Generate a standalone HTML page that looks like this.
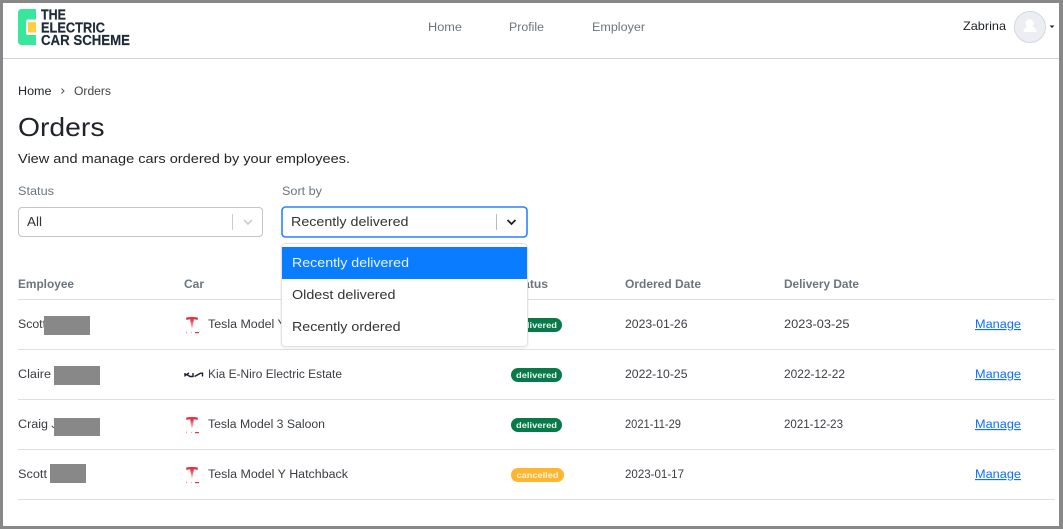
<!DOCTYPE html>
<html><head><meta charset="utf-8"><style>
html,body{margin:0;padding:0;background:#fff}
svg{display:block;font-family:"Liberation Sans",sans-serif}
</style></head><body>
<svg width="1063" height="529" viewBox="0 0 1063 529" xmlns="http://www.w3.org/2000/svg">
<defs>
<linearGradient id="fade" x1="0" y1="0" x2="0" y2="1"><stop offset="0" stop-color="#e8192c"/><stop offset="1" stop-color="#fde6e8"/></linearGradient>
<g id="tesla">
<path d="M0 0.600Q6 -0.600 12 0.600L11.500 3Q9 2.300 6 2.300Q3 2.300 0.500 3Z" fill="#ee2b3a"/>
<path d="M4.200 2.200H7.800L6.600 11.500H5.400Z" fill="url(#fade)"/>
<rect x="0" y="14.500" width="1" height="2" fill="#f6a5ac"/><rect x="5" y="15" width="1" height="1" fill="#f6a5ac"/><rect x="9" y="15" width="4" height="1.200" fill="#e8303f"/>
</g>
</defs>
<rect width="1063" height="529" fill="#888"/>
<rect x="3" y="3" width="1056" height="523" fill="#fff"/>
<rect x="3" y="58" width="1056" height="1" fill="#ccd3e0"/>

<!-- logo -->
<path d="M22 9h14v10.500h-8q-2 0-2 2v11.500q0 2 2 2h8v10h-14q-4 0-4-4v-28q0-4 4-4Z" fill="#38e69c"/>
<rect x="28" y="22" width="8" height="10.500" fill="#ffcf3c"/>
<g fill="#1f2a37" font-weight="700" font-size="14.500" stroke="#1f2a37" stroke-width="0.200">
<text x="41" y="19.500" textLength="25" lengthAdjust="spacingAndGlyphs">THE</text>
<text x="41" y="32.500" textLength="64" lengthAdjust="spacingAndGlyphs">ELECTRIC</text>
<text x="41" y="45" textLength="89" lengthAdjust="spacingAndGlyphs">CAR SCHEME</text>
</g>

<!-- nav -->
<g fill="#6c757d" font-size="11.500">
<text x="428" y="31" textLength="34" lengthAdjust="spacingAndGlyphs">Home</text>
<text x="509" y="31" textLength="35" lengthAdjust="spacingAndGlyphs">Profile</text>
<text x="592" y="31" textLength="53" lengthAdjust="spacingAndGlyphs">Employer</text>
</g>
<text x="963" y="30" font-size="12" fill="#212529" textLength="43" lengthAdjust="spacingAndGlyphs">Zabrina</text>
<circle cx="1030" cy="27" r="15.500" fill="#eceef3" stroke="#d3d8e0"/>
<circle cx="1029.500" cy="23.500" r="4.200" fill="#fff"/>
<path d="M1023.500 32q0-5.500 6.500-5.500t6.500 5.500Z" fill="#fff"/>
<path d="M1049.500 25.500h5l-2.500 2.500Z" fill="#212529"/>

<!-- breadcrumb -->
<text x="18" y="95" font-size="11.500" fill="#212529" textLength="33.500" lengthAdjust="spacingAndGlyphs">Home</text>
<path d="M61.500 88.500l2.500 2.500-2.500 2.500" fill="none" stroke="#555" stroke-width="1"/>
<text x="74" y="95" font-size="11.500" fill="#444" textLength="37" lengthAdjust="spacingAndGlyphs">Orders</text>

<text x="18" y="136" font-size="26" fill="#212529" textLength="86.500" lengthAdjust="spacingAndGlyphs">Orders</text>
<text x="18" y="163" font-size="13" fill="#212529" textLength="332" lengthAdjust="spacingAndGlyphs">View and manage cars ordered by your employees.</text>

<!-- filters -->
<text x="18" y="195" font-size="11.500" fill="#6c757d" textLength="36" lengthAdjust="spacingAndGlyphs">Status</text>
<text x="282" y="195" font-size="11.500" fill="#6c757d" textLength="40" lengthAdjust="spacingAndGlyphs">Sort by</text>

<rect x="18.500" y="207.500" width="244" height="29" rx="3.500" fill="#fff" stroke="#c4c4c4"/>
<text x="27" y="226" font-size="13" fill="#333" textLength="15" lengthAdjust="spacingAndGlyphs">All</text>
<rect x="232" y="214" width="1" height="16" fill="#ccc"/>
<path d="M244 220l4 4 4-4" fill="none" stroke="#ccc" stroke-width="1.600"/>

<rect x="282" y="207" width="245" height="30" rx="3.500" fill="#fff" stroke="#2684ff" stroke-width="1.600"/>
<text x="291" y="226" font-size="13" fill="#333" textLength="117.500" lengthAdjust="spacingAndGlyphs">Recently delivered</text>
<rect x="496" y="214" width="1" height="16" fill="#bbb"/>
<path d="M507.500 220l4 4 4-4" fill="none" stroke="#222" stroke-width="1.800"/>

<!-- table header -->
<g fill="#6c757d" font-size="11.500" font-weight="700">
<text x="18" y="288" textLength="56" lengthAdjust="spacingAndGlyphs">Employee</text>
<text x="184" y="288" textLength="20" lengthAdjust="spacingAndGlyphs">Car</text>
<text x="511" y="288" textLength="37" lengthAdjust="spacingAndGlyphs">Status</text>
<text x="625" y="288" textLength="76" lengthAdjust="spacingAndGlyphs">Ordered Date</text>
<text x="784" y="288" textLength="75" lengthAdjust="spacingAndGlyphs">Delivery Date</text>
</g>
<g fill="#dcdfe3">
<rect x="18" y="299" width="1037" height="1"/>
<rect x="18" y="349" width="1037" height="1"/>
<rect x="18" y="399" width="1037" height="1"/>
<rect x="18" y="449" width="1037" height="1"/>
<rect x="18" y="499" width="1037" height="1"/>
</g>

<!-- rows -->
<g fill="#3a3d42" font-size="11.500">
<text x="18" y="328" textLength="28" lengthAdjust="spacingAndGlyphs">Scott</text>
<text x="208" y="328" textLength="90" lengthAdjust="spacingAndGlyphs">Tesla Model Y H</text>
<text x="625" y="328" textLength="62.500" lengthAdjust="spacingAndGlyphs">2023-01-26</text>
<text x="784" y="328" textLength="65.500" lengthAdjust="spacingAndGlyphs">2023-03-25</text>

<text x="18" y="378" textLength="33" lengthAdjust="spacingAndGlyphs">Claire</text>
<text x="208" y="378" textLength="134" lengthAdjust="spacingAndGlyphs">Kia E-Niro Electric Estate</text>
<text x="625" y="378" textLength="62.500" lengthAdjust="spacingAndGlyphs">2022-10-25</text>
<text x="784" y="378" textLength="61" lengthAdjust="spacingAndGlyphs">2022-12-22</text>

<text x="18" y="428" textLength="30" lengthAdjust="spacingAndGlyphs">Craig</text>
<text x="51.500" y="428">J</text>
<text x="208" y="428" textLength="117" lengthAdjust="spacingAndGlyphs">Tesla Model 3 Saloon</text>
<text x="625" y="428" textLength="56" lengthAdjust="spacingAndGlyphs">2021-11-29</text>
<text x="784" y="428" textLength="59" lengthAdjust="spacingAndGlyphs">2021-12-23</text>

<text x="18" y="478" textLength="29" lengthAdjust="spacingAndGlyphs">Scott</text>
<text x="208" y="478" textLength="140" lengthAdjust="spacingAndGlyphs">Tesla Model Y Hatchback</text>
<text x="625" y="478" textLength="59" lengthAdjust="spacingAndGlyphs">2023-01-17</text>
</g>

<!-- redactions -->
<g fill="#888">
<rect x="44" y="316" width="46" height="19"/>
<rect x="54" y="366" width="46" height="19"/>
<rect x="54" y="418" width="46" height="18"/>
<rect x="50" y="464" width="36" height="19"/>
</g>

<!-- logos -->
<use href="#tesla" x="186" y="317"/>
<use href="#tesla" x="186" y="417"/>
<use href="#tesla" x="186" y="467"/>
<path d="M185 376.500V373M185.300 375.300L189 373M186.800 374.500L190 376.500H193V373M194.500 376.500L200.500 373.200H202.500V376.500" fill="none" stroke="#1a1f2b" stroke-width="1.400"/>

<!-- badges -->
<rect x="511" y="318" width="51" height="14" rx="7" fill="#087a4a"/>
<text x="516" y="328" font-size="8.500" font-weight="700" fill="#e8f5ee" textLength="41" lengthAdjust="spacingAndGlyphs">delivered</text>
<rect x="511" y="368" width="51" height="14" rx="7" fill="#087a4a"/>
<text x="516" y="378" font-size="8.500" font-weight="700" fill="#e8f5ee" textLength="41" lengthAdjust="spacingAndGlyphs">delivered</text>
<rect x="511" y="418" width="51" height="14" rx="7" fill="#087a4a"/>
<text x="516" y="428" font-size="8.500" font-weight="700" fill="#e8f5ee" textLength="41" lengthAdjust="spacingAndGlyphs">delivered</text>
<rect x="511" y="468" width="53" height="14" rx="7" fill="#ffb52e"/>
<text x="516.500" y="478" font-size="8.500" font-weight="700" fill="#fff3da" textLength="42" lengthAdjust="spacingAndGlyphs">cancelled</text>

<!-- manage links -->
<g fill="#0d6efd" font-size="11.500" text-decoration="underline">
<text x="975" y="328" textLength="46" lengthAdjust="spacingAndGlyphs">Manage</text>
<text x="975" y="378" textLength="46" lengthAdjust="spacingAndGlyphs">Manage</text>
<text x="975" y="428" textLength="46" lengthAdjust="spacingAndGlyphs">Manage</text>
<text x="975" y="478" textLength="46" lengthAdjust="spacingAndGlyphs">Manage</text>
</g>

<!-- dropdown menu -->
<rect x="280" y="245" width="249" height="104" rx="5" fill="#000" opacity="0.04"/>
<rect x="281.500" y="243.500" width="246" height="103" rx="4" fill="#fff" stroke="#e2e2e2"/>
<rect x="282" y="247" width="245" height="32" fill="#0a7cff"/>
<g font-size="13">
<text x="292" y="267" fill="#e9f3ff" textLength="117" lengthAdjust="spacingAndGlyphs">Recently delivered</text>
<text x="292" y="299" fill="#333" textLength="103.500" lengthAdjust="spacingAndGlyphs">Oldest delivered</text>
<text x="292" y="331" fill="#333" textLength="108.500" lengthAdjust="spacingAndGlyphs">Recently ordered</text>
</g>
</svg>
</body></html>
